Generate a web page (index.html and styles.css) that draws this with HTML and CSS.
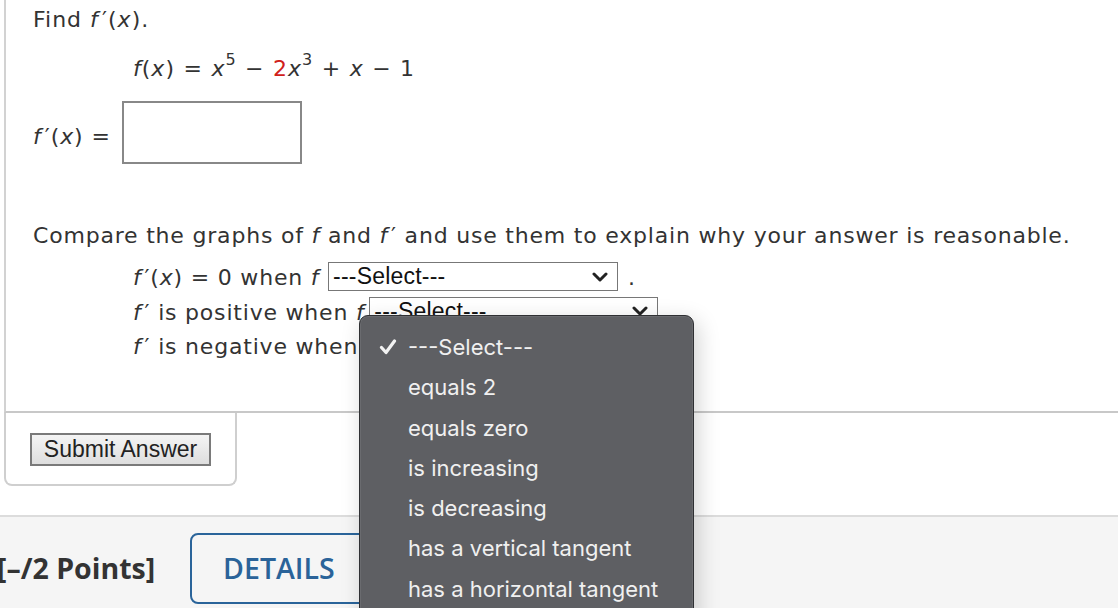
FILE: index.html
```html
<!DOCTYPE html>
<html>
<head>
<meta charset="utf-8">
<link rel="stylesheet" href="styles.css">
</head>
<body>
<div class="page">
  <div class="question">
    <p class="find">Find <i>f</i>&#8202;′(<i>x</i>).</p>
    <p class="eq"><i>f</i>(<i>x</i>) = <i>x</i><sup>5</sup> − <span class="red">2</span><i>x</i><sup>3</sup> + <i>x</i> − 1</p>
    <div class="answer-row">
      <span class="label"><i>f</i>&#8202;′(<i>x</i>) =</span>
      <div class="input"></div>
    </div>
    <p class="compare">Compare the graphs of <i>f</i> and <i>f</i>&#8202;′ and use them to explain why your answer is reasonable.</p>
    <div class="rows">
      <div class="row"><i>f</i>&#8202;′(<i>x</i>) = 0 when <i>f</i> <span class="sel sel1"><span class="sel-text">---Select---</span><svg class="chev" width="16" height="10" viewBox="0 0 16 10"><path d="M2 2 L8 8 L14 2" fill="none" stroke="#222" stroke-width="3" stroke-linecap="round" stroke-linejoin="round"/></svg></span> <span class="dot">.</span></div>
      <div class="row"><i>f</i>&#8202;′ is positive when <i>f</i> <span class="sel sel2"><span class="sel-text">---Select---</span><svg class="chev" width="16" height="10" viewBox="0 0 16 10"><path d="M2 2 L8 8 L14 2" fill="none" stroke="#222" stroke-width="3" stroke-linecap="round" stroke-linejoin="round"/></svg></span></div>
      <div class="row"><i>f</i>&#8202;′ is negative when</div>
    </div>
  </div>
  <div class="submit-box">
    <div class="submit-btn">Submit Answer</div>
  </div>
  <div class="footer">
    <span class="points">[–/2 Points]</span>
    <span class="details">DETAILS</span>
  </div>
  <div class="menu">
    <div class="item checked"><svg class="check" width="18" height="16" viewBox="0 0 18 16"><path d="M2.5 8.5 L7 13.5 L15.5 2" fill="none" stroke="#f2f2f2" stroke-width="3.2" stroke-linecap="round" stroke-linejoin="round"/></svg>---Select---</div>
    <div class="item">equals 2</div>
    <div class="item">equals zero</div>
    <div class="item">is increasing</div>
    <div class="item">is decreasing</div>
    <div class="item">has a vertical tangent</div>
    <div class="item">has a horizontal tangent</div>
  </div>
</div>
</body>
</html>
```

FILE: styles.css
```css
html, body {
  margin: 0;
  padding: 0;
  background: #fff;
  overflow: hidden;
}
.page {
  position: relative;
  width: 1118px;
  height: 608px;
  overflow: hidden;
  font-family: "DejaVu Sans", Verdana, sans-serif;
  color: #333;
}
.question {
  margin-left: 4px;
  border-left: 2px solid #d2d2d2;
  border-bottom: 2px solid #c8c8c8;
  padding-left: 27px;
  padding-top: 5px;
  height: 406px;
  box-sizing: content-box;
}
.question p { margin: 0; }
.find {
  font-size: 22px;
  line-height: 30px;
  letter-spacing: 1px;
}
.eq {
  font-size: 22px;
  line-height: 30px;
  letter-spacing: 1px;
  word-spacing: 0.5px;
  margin-top: 19px !important;
  padding-left: 100px;
}
.eq sup {
  font-size: 16px;
  line-height: 0;
  vertical-align: 0;
  position: relative;
  top: -11px;
}
.red { color: #d0201a; }
.answer-row {
  display: flex;
  align-items: flex-end;
  margin-top: 17px;
}
.label {
  font-size: 22px;
  line-height: 30px;
  letter-spacing: 0.9px;
  margin-bottom: 12px;
  width: 89px;
  white-space: nowrap;
}
.input {
  width: 176px;
  height: 59px;
  border: 2px solid #888;
  background: #fff;
}
.compare {
  font-size: 22px;
  line-height: 30px;
  letter-spacing: 0.8px;
  margin-top: 57px !important;
  white-space: nowrap;
}
.rows {
  margin-top: 10px;
  padding-left: 100px;
}
.row {
  font-size: 22px;
  line-height: 34.5px;
  height: 34.5px;
  letter-spacing: 0.8px;
  white-space: nowrap;
}
.sel {
  display: inline-flex;
  align-items: center;
  justify-content: space-between;
  box-sizing: border-box;
  height: 29px;
  border: 1px solid #777;
  background: #fff;
  vertical-align: top;
  margin-top: 1px;
  padding: 0 9px 0 4px;
  font-family: "Liberation Sans", Arial, sans-serif;
  font-size: 23px;
  color: #111;
  line-height: 27px;
  letter-spacing: 0;
}
.sel1 { width: 290px; margin-left: 1px; }
.sel2 { width: 289px; margin-left: -3px; }
.sel-text { letter-spacing: 0.2px; }
.chev { display: block; }
.dot { margin-left: 2px; }
.submit-box {
  margin-left: 4px;
  width: 233px;
  border: 2px solid #cfcfcf;
  border-top: none;
  border-radius: 0 0 8px 8px;
  padding-top: 20px;
  box-sizing: border-box;
  height: 73px;
}
.submit-btn {
  display: inline-block;
  margin-left: 24px;
  box-sizing: border-box;
  width: 181px;
  height: 33px;
  border: 2px solid #7a7a7a;
  background: linear-gradient(#f4f4f4, #dedede);
  font-family: "Liberation Sans", Arial, sans-serif;
  font-size: 23px;
  line-height: 29px;
  text-align: center;
  color: #222;
}
.footer {
  margin-top: 29px;
  border-top: 2px solid #dcdcdc;
  background: #f5f5f5;
  height: 100px;
  display: flex;
  align-items: flex-start;
  padding-top: 16px;
  font-family: "Open Sans", sans-serif;
}
.points {
  margin-left: -3px;
  font-size: 28.5px;
  font-weight: 700;
  color: #333;
  line-height: 71px;
}
.details {
  margin-left: 35px;
  box-sizing: border-box;
  height: 71px;
  border: 2px solid #2a649a;
  border-radius: 8px;
  padding: 0 31px;
  font-size: 28.5px;
  font-weight: 600;
  line-height: 67px;
  color: #2a6399;
}
.menu {
  position: absolute;
  left: 359px;
  top: 315px;
  width: 335px;
  height: 310px;
  box-sizing: border-box;
  background: #5e5f63;
  border: 1px solid #2f3033;
  border-radius: 9px 9px 0 0;
  box-shadow: 0 0 0 1px rgba(255,255,255,0.08) inset, 4px 6px 22px rgba(0,0,0,0.18);
  padding-top: 11px;
  font-family: Inter, "Noto Sans", sans-serif;
  font-size: 22px;
  color: #f0f0f0;
}
.item {
  height: 40.3px;
  line-height: 40px;
  padding-left: 48px;
  position: relative;
  white-space: nowrap;
}
.check {
  position: absolute;
  left: 19px;
  top: 12px;
}
```
